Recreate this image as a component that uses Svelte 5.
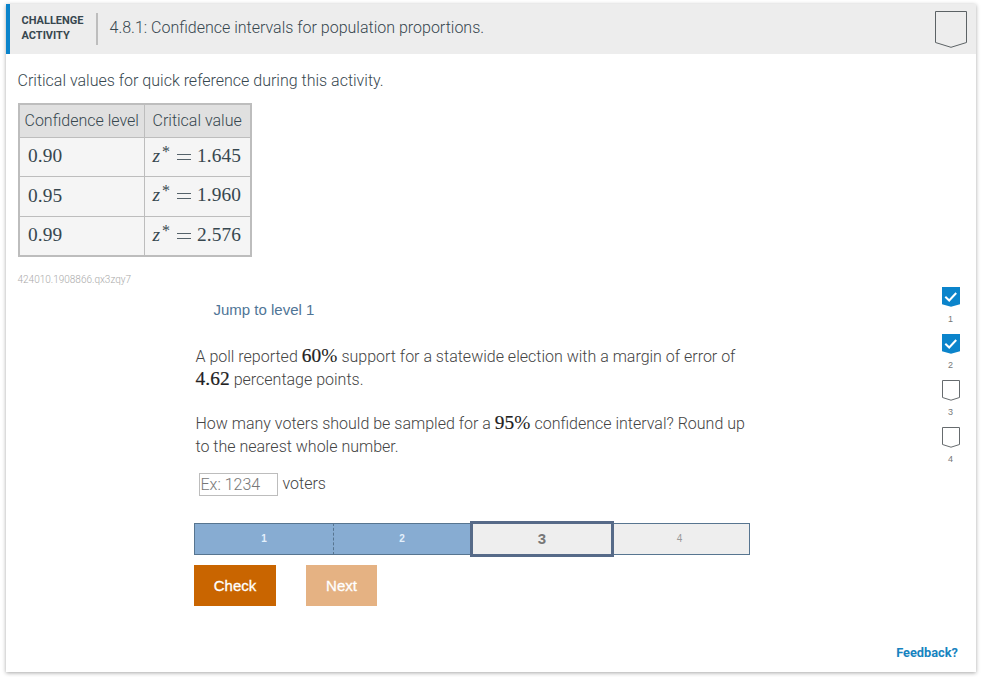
<script>
  const rows = [
    ['0.90', '1.645'],
    ['0.95', '1.960'],
    ['0.99', '2.576'],
  ];
  const levels = [
    { n: 1, done: true },
    { n: 2, done: true },
    { n: 3, done: false },
    { n: 4, done: false },
  ];
</script>

<main class="card">
  <header>
    <div class="label">CHALLENGE<br />ACTIVITY</div>
    <h1>4.8.1: Confidence intervals for population proportions.</h1>
    <svg class="badge" width="34" height="38" viewBox="0 0 34 38">
      <path d="M1.5 1.5H32.5V32.5L17 37.3L1.5 32.5Z" fill="none" stroke="#5c6265" />
    </svg>
  </header>

  <p class="intro">Critical values for quick reference during this activity.</p>

  <table>
    <thead>
      <tr><th>Confidence level</th><th class="second">Critical value</th></tr>
    </thead>
    <tbody>
      {#each rows as [level, value]}
        <tr>
          <td><span class="math plain">{level}</span></td>
          <td><span class="formula math"><i>z</i><span class="star">*</span><svg class="eq" width="14" height="6" viewBox="0 0 14 6"><path d="M0 0.5H14M0 5.5H14" stroke="#55626a" /></svg><span>{value}</span></span></td>
        </tr>
      {/each}
    </tbody>
  </table>

  <div class="code">424010.1908866.qx3zqy7</div>

  <div class="body">
    <section>
      <a class="jump" href="#level1">Jump to level 1</a>
      <p class="q1"><span class="line">A poll reported <b class="math">60<span class="pct">%</span></b> support for a statewide election with a margin of error of</span><span class="line"><b class="math">4.62</b> percentage points.</span></p>
      <p class="q2"><span class="line">How many voters should be sampled for a <b class="math">95<span class="pct">%</span></b> confidence interval? Round up</span><span class="line">to the nearest whole number.</span></p>
      <div class="answer"><input type="text" placeholder="Ex: 1234" /><span>voters</span></div>
      <div class="progress">
        <div class="seg one">1</div>
        <div class="seg two">2</div>
        <div class="seg current">3</div>
        <div class="seg four">4</div>
      </div>
      <div class="buttons">
        <button class="check">Check</button>
        <button class="next">Next</button>
      </div>
    </section>
    <aside>
      {#each levels as level}
        <div class="level">
          <svg width="20" height="22" viewBox="0 0 20 22">
            {#if level.done}
              <path d="M1 1H19V18.2L10 20.7L1 18.2Z" fill="#0b84cb" />
              <path d="M4.3 10.7L8.2 14.5L15.2 7" fill="none" stroke="#fff" stroke-width="2" />
            {:else}
              <path d="M1.5 1.5H18.5V18.5L10 21.2L1.5 18.5Z" fill="#fff" stroke="#666b6e" />
            {/if}
          </svg>
          <span>{level.n}</span>
        </div>
      {/each}
    </aside>
  </div>

  <footer><a href="#feedback">Feedback?</a></footer>
</main>

<style>
  :global(body) {
    margin: 0;
    background: #fff;
  }
  :global(#app) {
    display: flow-root;
    padding-bottom: 5px;
  }
  * {
    box-sizing: border-box;
  }
  .card {
    display: flex;
    flex-direction: column;
    width: 970px;
    height: 668px;
    margin: 4px 0 0 6px;
    background: #fff;
    box-shadow: 0 1px 4px rgba(0, 0, 0, 0.35);
    font: 300 16px/23px Roboto, sans-serif;
    color: #37474f;
  }
  header {
    display: flex;
    align-items: center;
    flex: none;
    height: 50px;
    background: #ededed;
    border-left: 4px solid #0b84cb;
  }
  .label {
    width: 88px;
    height: 32px;
    padding-left: 11.5px;
    border-right: 2px solid #bdbdbd;
    font-size: 11px;
    font-weight: 700;
    line-height: 15px;
    white-space: nowrap;
  }
  h1 {
    flex: 1;
    margin: 0 0 3px 11.5px;
    font-size: 16px;
    font-weight: 300;
    white-space: nowrap;
  }
  .badge {
    margin-right: 8px;
  }
  .intro {
    margin: 15px 0 11px 11.5px;
    white-space: nowrap;
  }
  table {
    width: 234px;
    height: 154px;
    margin-left: 12px;
    border: 2px solid #bdbdbd;
    border-collapse: collapse;
    table-layout: fixed;
    background: #f5f5f5;
  }
  th {
    width: 125px;
    height: 33px;
    padding: 0 0 0 4.5px;
    border: 1px solid #bdbdbd;
    background: #e0e0e0;
    font-weight: 300;
    text-align: left;
    white-space: nowrap;
  }
  th.second {
    width: 107px;
    padding-left: 8px;
  }
  td {
    height: 39px;
    padding: 0 0 2px 8px;
    border: 1px solid #bdbdbd;
  }
  .math {
    font-family: 'Liberation Serif', serif;
    font-size: 19.36px;
    font-weight: 400;
    line-height: 20px;
    letter-spacing: 0.1px;
  }
  .plain {
    display: block;
    padding-top: 1px;
    height: 21px;
  }
  .formula {
    display: flex;
    align-items: baseline;
    height: 20px;
  }
  .formula i {
    width: 9.5px;
  }
  .star {
    width: 15px;
    font-size: 16px;
    line-height: 20px;
    margin-top: -4px;
    align-self: flex-start;
  }
  .eq {
    align-self: center;
    margin: 2px 6px 0 0;
  }
  .code {
    margin: 15px 0 0 11.5px;
    font-size: 10px;
    line-height: 16px;
    color: #aaa;
    white-space: nowrap;
  }
  .body {
    display: flex;
    justify-content: space-between;
    height: 330px;
  }
  section {
    width: 556px;
    margin: 10px 0 0 188px;
    color: #444;
  }
  .jump {
    display: block;
    margin-left: 19.5px;
    font: 400 15px/23px 'Liberation Sans', sans-serif;
    color: #4f7596;
    text-decoration: none;
  }
  p {
    white-space: nowrap;
  }
  .q1 {
    margin: 24px 0 0 1.5px;
  }
  .q2 {
    margin: 21px 0 0 1.5px;
  }
  .line {
    display: block;
    height: 23px;
  }
  .line .math {
    color: #222;
    -webkit-text-stroke: 0.2px #222;
  }
  .pct {
    -webkit-text-stroke: 0;
  }
  .answer {
    display: flex;
    align-items: center;
    gap: 4.5px;
    height: 23px;
    margin: 15px 0 0 5px;
  }
  .answer span {
    margin-bottom: 2px;
  }
  input {
    width: 79px;
    height: 23px;
    padding: 0 0.5px;
    border: 1px solid #bdbdbd;
    background: #fff;
    font: 300 16px Roboto, sans-serif;
  }
  input::placeholder {
    color: #777;
  }
  .progress {
    display: flex;
    align-items: center;
    height: 36px;
    margin-top: 25px;
    font: 400 10px 'Liberation Sans', sans-serif;
  }
  .seg {
    display: flex;
    align-items: center;
    justify-content: center;
    height: 32px;
    padding-bottom: 1px;
    border: 1px solid #577590;
    border-width: 1px 0;
    background: #87acd2;
    color: #e4f0fc;
    font-weight: 700;
  }
  .one {
    width: 139px;
    border-left-width: 1px;
  }
  .two {
    width: 137px;
    border-left: 1px dashed #577590;
  }
  .current {
    width: 144px;
    height: 36px;
    padding-bottom: 2px;
    border: 3px solid #566a88;
    background: #eee;
    color: #777;
    font-size: 15px;
  }
  .four {
    width: 136px;
    padding-right: 4px;
    border-right-width: 1px;
    background: #eee;
    color: #999;
    font-weight: 400;
  }
  .buttons {
    display: flex;
    gap: 30px;
    margin-top: 8px;
  }
  button {
    height: 41px;
    padding: 0;
    border: 0;
    color: #fff;
    font: 400 15px 'Liberation Sans', sans-serif;
    -webkit-text-stroke: 0.3px #fff;
  }
  .check {
    width: 82px;
    background: #c96500;
  }
  .next {
    width: 71px;
    background: #e5b283;
  }
  aside {
    width: 20px;
    margin: -2px 15px 0 0;
  }
  .level {
    display: flex;
    flex-direction: column;
    align-items: center;
    height: 46.7px;
    font: 300 9px/11px 'Liberation Sans', sans-serif;
    color: #777;
  }
  .level span {
    margin-top: 5.5px;
    margin-right: 1px;
  }
  footer {
    margin: auto 18px 8px auto;
  }
  footer a {
    font-size: 12.8px;
    font-weight: 700;
    color: #1683c0;
    text-decoration: none;
  }
</style>
